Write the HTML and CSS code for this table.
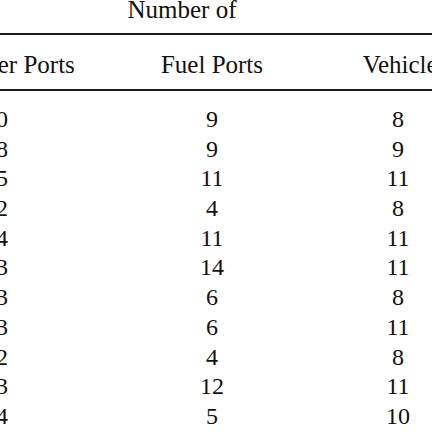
FILE: index.html
```html
<!DOCTYPE html>
<html>
<head>
<meta charset="utf-8">
<link rel="stylesheet" href="styles.css">
</head>
<body>
<div class="table">
  <div class="title">Number of</div>
  <div class="row head">
    <div class="cell">Passenger Ports</div>
    <div class="cell">Fuel Ports</div>
    <div class="cell shift">Vehicles</div>
  </div>
  <div class="body">
    <div class="row data"><div class="cell">10</div><div class="cell">9</div><div class="cell">8</div></div>
    <div class="row data"><div class="cell">18</div><div class="cell">9</div><div class="cell">9</div></div>
    <div class="row data"><div class="cell">15</div><div class="cell">11</div><div class="cell">11</div></div>
    <div class="row data"><div class="cell">12</div><div class="cell">4</div><div class="cell">8</div></div>
    <div class="row data"><div class="cell">14</div><div class="cell">11</div><div class="cell">11</div></div>
    <div class="row data"><div class="cell">13</div><div class="cell">14</div><div class="cell">11</div></div>
    <div class="row data"><div class="cell">13</div><div class="cell">6</div><div class="cell">8</div></div>
    <div class="row data"><div class="cell">13</div><div class="cell">6</div><div class="cell">11</div></div>
    <div class="row data"><div class="cell">12</div><div class="cell">4</div><div class="cell">8</div></div>
    <div class="row data"><div class="cell">13</div><div class="cell">12</div><div class="cell">11</div></div>
    <div class="row data"><div class="cell">14</div><div class="cell">5</div><div class="cell">10</div></div>
  </div>
</div>
</body>
</html>
```
FILE: styles.css
```css
html, body {
  margin: 0;
  padding: 0;
  background: #ffffff;
  overflow: hidden;
}
body {
  width: 432px;
  height: 432px;
  font-family: "Liberation Serif", "Times New Roman", serif;
  color: #111111;
}
.table {
  width: 604px;
  margin-left: -120px;
}
.title {
  font-size: 25px;
  line-height: 24px;
  text-align: center;
  margin-top: -2px;
  margin-bottom: 11px;
}
.row {
  display: grid;
  grid-template-columns: 232px 200px 172px;
}
.cell {
  text-align: center;
  white-space: nowrap;
}
.head {
  font-size: 25px;
  line-height: 24px;
  border-top: 2px solid #1a1a1a;
  border-bottom: 2px solid #1a1a1a;
  padding-top: 17.5px;
  padding-bottom: 12.5px;
}
.head .shift {
  padding-left: 14px;
}
.body {
  padding-top: 14px;
}
.data {
  font-size: 24px;
  height: 29.7px;
  line-height: 29.7px;
}
```
